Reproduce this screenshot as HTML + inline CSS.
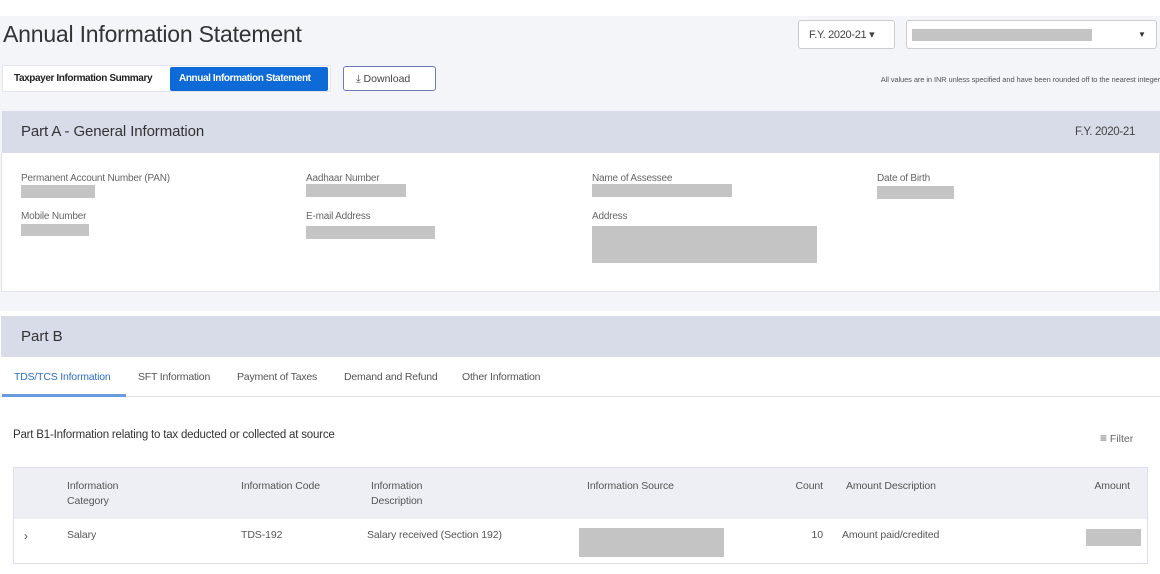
<!DOCTYPE html>
<html><head><meta charset="utf-8"><style>
*{margin:0;padding:0;box-sizing:border-box}
body{width:1160px;height:574px;overflow:hidden;position:relative;background:#fff;font-family:"Liberation Sans",sans-serif;color:#444}
.a{position:absolute;white-space:nowrap}
.r{position:absolute;background:#c4c4c4}
.lbl{font-size:10px;color:#666;letter-spacing:-0.2px}
.tab{font-size:10.5px;color:#555;letter-spacing:-0.2px;top:371px}
.th{font-size:10.5px;color:#555;line-height:15px;letter-spacing:-0.1px}
.td{font-size:10.5px;color:#555;letter-spacing:-0.1px}
</style></head><body>
<div class="a" style="left:0;top:16px;width:1160px;height:295px;background:#f4f5f9"></div>
<div class="a" style="left:3px;top:21px;font-size:23px;color:#333;letter-spacing:-0.2px">Annual Information Statement</div>
<div class="a" style="left:798px;top:20px;width:97px;height:29px;background:#fff;border:1px solid #ccc;border-radius:3px;font-size:11px;color:#444;padding:7px 0 0 10px;letter-spacing:-0.3px">F.Y. 2020-21 ▾</div>
<div class="a" style="left:906px;top:20px;width:251px;height:29px;background:#fff;border:1px solid #ccc;border-radius:3px"></div>
<div class="r" style="left:912px;top:29px;width:180px;height:12px"></div>
<div class="a" style="left:1138px;top:30px;font-size:8px;color:#333">▼</div>
<div class="a" style="left:2px;top:65px;width:329px;height:27px;background:#fff;border:1px solid #e3e5ee;border-radius:2px"></div>
<div class="a" style="left:14px;top:73px;font-size:10px;color:#222;font-weight:bold;letter-spacing:-0.4px">Taxpayer Information Summary</div>
<div class="a" style="left:170px;top:67px;width:158px;height:24px;background:#0d6ad6;border-radius:2px;color:#fff;font-size:10px;font-weight:bold;letter-spacing:-0.4px;padding:6px 0 0 9px">Annual Information Statement</div>
<div class="a" style="left:343px;top:66px;width:93px;height:25px;border:1px solid #6f78b8;border-radius:3px;background:#fff;font-size:10.5px;color:#444;padding:6px 0 0 12px">⤓ Download</div>
<div class="a" style="right:0;top:75px;font-size:7.5px;color:#555;letter-spacing:-0.1px">All values are in INR unless specified and have been rounded off to the nearest integer</div>
<div class="a" style="left:2px;top:111px;width:1158px;height:42px;background:#d8dbe8"></div>
<div class="a" style="left:21px;top:123px;font-size:15px;color:#333;letter-spacing:-0.1px">Part A - General Information</div>
<div class="a" style="left:1075px;top:126px;font-size:11.5px;color:#444;letter-spacing:-0.3px">F.Y. 2020-21</div>
<div class="a" style="left:1px;top:153px;width:1159px;height:139px;background:#fff;border:1px solid #e3e5ee;border-top:none"></div>
<div class="a lbl" style="left:21px;top:173px">Permanent Account Number (PAN)</div>
<div class="a lbl" style="left:306px;top:173px">Aadhaar Number</div>
<div class="a lbl" style="left:592px;top:173px">Name of Assessee</div>
<div class="a lbl" style="left:877px;top:173px">Date of Birth</div>
<div class="r" style="left:21px;top:185px;width:74px;height:13px"></div>
<div class="r" style="left:306px;top:184px;width:100px;height:13px"></div>
<div class="r" style="left:592px;top:184px;width:140px;height:13px"></div>
<div class="r" style="left:877px;top:186px;width:77px;height:13px"></div>
<div class="a lbl" style="left:21px;top:211px">Mobile Number</div>
<div class="a lbl" style="left:306px;top:211px">E-mail Address</div>
<div class="a lbl" style="left:592px;top:211px">Address</div>
<div class="r" style="left:21px;top:224px;width:68px;height:12px"></div>
<div class="r" style="left:306px;top:226px;width:129px;height:13px"></div>
<div class="r" style="left:592px;top:226px;width:225px;height:37px"></div>
<div class="a" style="left:1px;top:316px;width:1159px;height:41px;background:#d8dbe8"></div>
<div class="a" style="left:21px;top:328px;font-size:15px;color:#333">Part B</div>
<div class="a" style="left:0;top:396px;width:1160px;height:1px;background:#e0e3ec"></div>
<div class="a" style="left:2px;top:394px;width:124px;height:3px;background:#6a9be0"></div>
<div class="a tab" style="left:14px;color:#2d6fc9">TDS/TCS Information</div>
<div class="a tab" style="left:138px">SFT Information</div>
<div class="a tab" style="left:237px">Payment of Taxes</div>
<div class="a tab" style="left:344px">Demand and Refund</div>
<div class="a tab" style="left:462px">Other Information</div>
<div class="a" style="left:13px;top:429px;font-size:11.5px;color:#333;letter-spacing:-0.2px">Part B1-Information relating to tax deducted or collected at source</div>
<div class="a" style="left:1100px;top:431px;font-size:10.5px;color:#666"><span style="font-size:12px">≡</span> Filter</div>
<div class="a" style="left:13px;top:467px;width:1135px;height:97px;border:1px solid #dde0ec"></div>
<div class="a" style="left:14px;top:468px;width:1133px;height:51px;background:#eeeff5"></div>
<div class="a th" style="left:67px;top:479px">Information<br>Category</div>
<div class="a th" style="left:241px;top:479px">Information Code</div>
<div class="a th" style="left:371px;top:479px">Information<br>Description</div>
<div class="a th" style="left:587px;top:479px">Information Source</div>
<div class="a th" style="right:337px;top:479px">Count</div>
<div class="a th" style="left:846px;top:479px">Amount Description</div>
<div class="a th" style="right:30px;top:479px">Amount</div>
<div class="a td" style="left:24px;top:529px;font-size:12px">›</div>
<div class="a td" style="left:67px;top:529px">Salary</div>
<div class="a td" style="left:241px;top:529px">TDS-192</div>
<div class="a td" style="left:367px;top:529px">Salary received (Section 192)</div>
<div class="r" style="left:579px;top:528px;width:145px;height:29px"></div>
<div class="a td" style="right:337px;top:529px">10</div>
<div class="a td" style="left:842px;top:529px">Amount paid/credited</div>
<div class="r" style="left:1086px;top:529px;width:55px;height:17px"></div>
</body></html>
